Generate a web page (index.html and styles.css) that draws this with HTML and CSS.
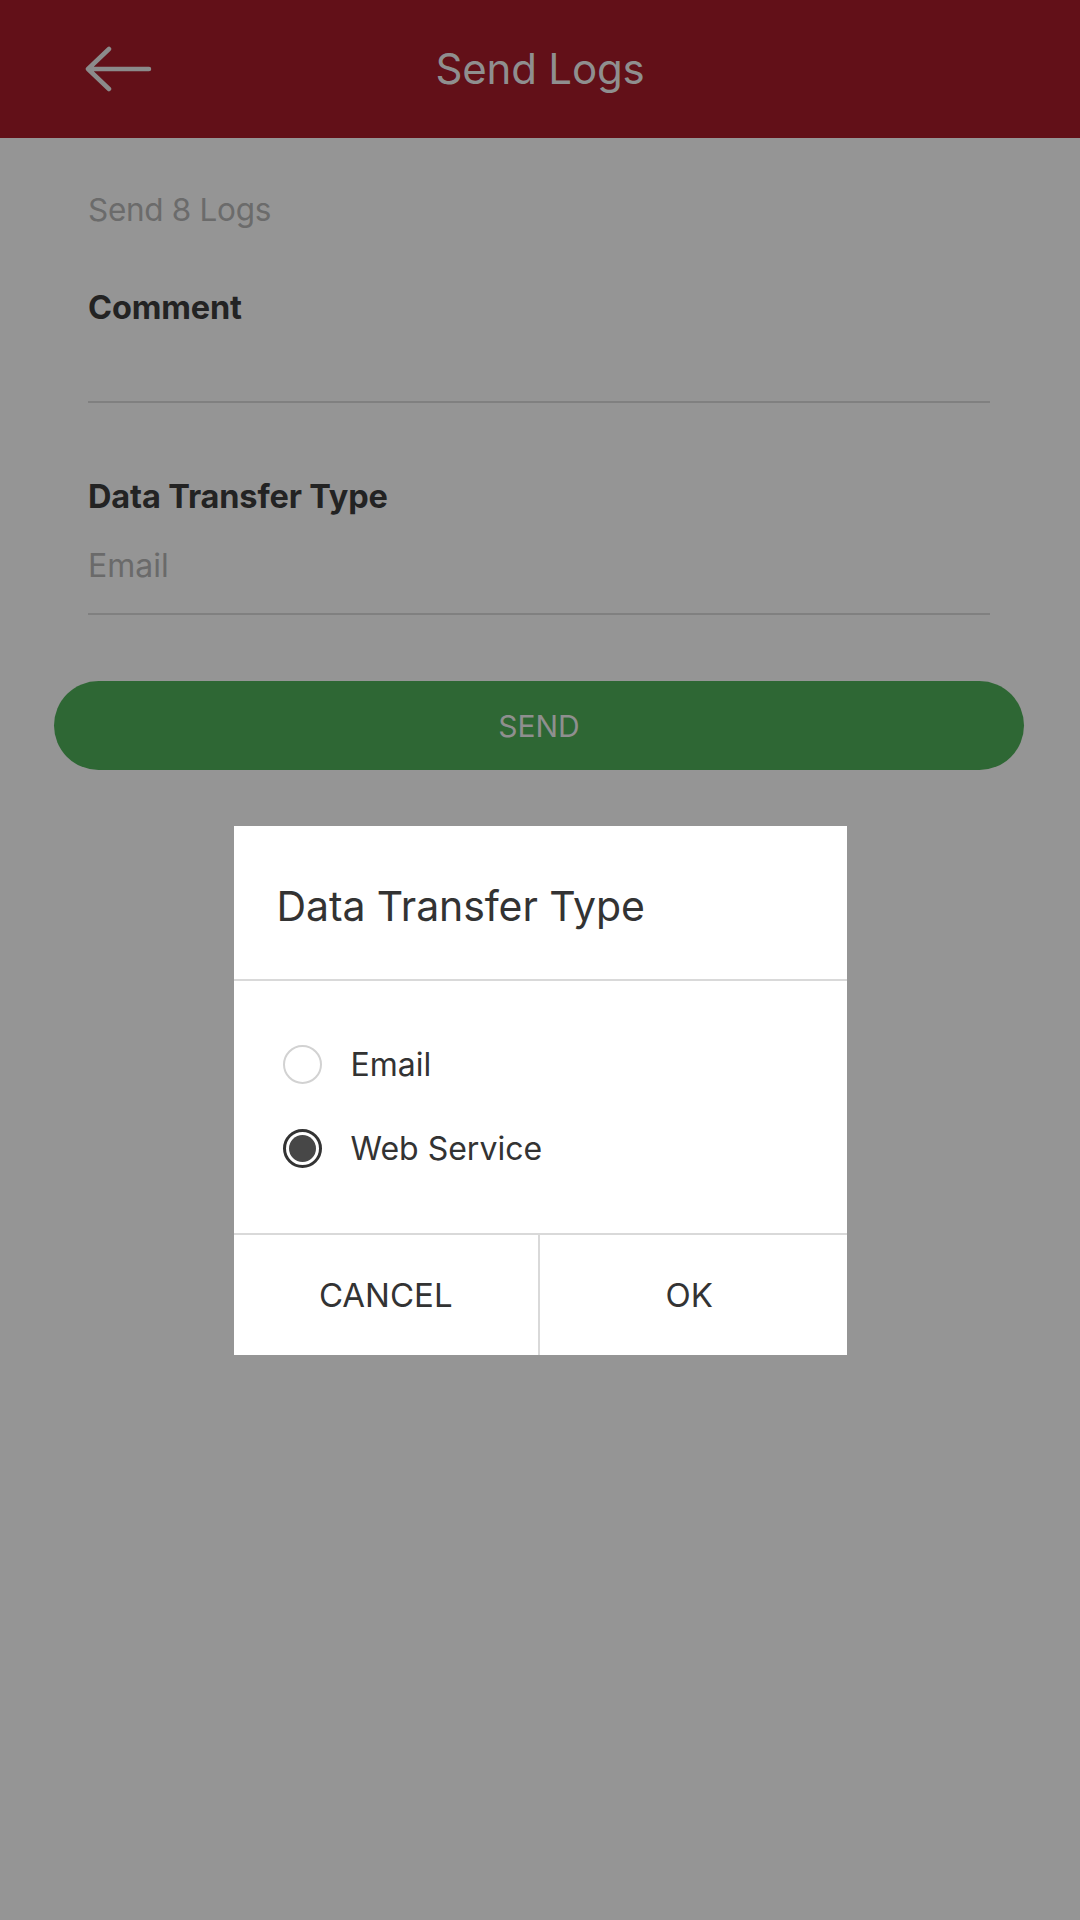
FILE: index.html
```html
<!DOCTYPE html>
<html lang="en">
<head>
<meta charset="utf-8">
<title>Send Logs</title>
<link rel="stylesheet" href="styles.css">
</head>
<body>
<div class="app">
  <header class="topbar">
    <div class="topbar-left">
      <svg class="back" width="68" height="46" viewBox="0 0 68 46" aria-hidden="true">
        <path d="M3 23 H64 M24 3 L3 23 L24 43" fill="none" stroke="#8b8b8b" stroke-width="4.5" stroke-linecap="round" stroke-linejoin="round"/>
      </svg>
    </div>
    <h1 class="topbar-title">Send Logs</h1>
    <div class="topbar-right"></div>
  </header>

  <main class="content">
    <p class="count">Send 8 Logs</p>
    <label class="field-label">Comment</label>
    <div class="field field-comment"></div>
    <label class="field-label field-label-2">Data Transfer Type</label>
    <div class="field field-select"><span class="field-value">Email</span></div>
    <button class="send-btn" type="button">SEND</button>
  </main>
</div>

<div class="overlay">
  <div class="dialog" role="dialog">
    <div class="dialog-head">Data Transfer Type</div>
    <div class="dialog-body">
      <div class="option">
        <span class="radio"></span>
        <span class="option-text">Email</span>
      </div>
      <div class="option">
        <span class="radio radio-on"><span class="radio-dot"></span></span>
        <span class="option-text">Web Service</span>
      </div>
    </div>
    <div class="dialog-actions">
      <button class="action action-cancel" type="button">CANCEL</button>
      <button class="action action-ok" type="button">OK</button>
    </div>
  </div>
</div>
</body>
</html>
```

FILE: styles.css
```css
* { box-sizing: border-box; }

html, body {
  margin: 0;
  padding: 0;
}

body {
  width: 1080px;
  height: 1920px;
  background: #959595;
  font-family: Inter, "Noto Sans", "Liberation Sans", sans-serif;
  overflow: hidden;
}

.app {
  display: flex;
  flex-direction: column;
  height: 1920px;
}

.topbar {
  height: 138px;
  background: #621018;
  display: grid;
  grid-template-columns: 1fr auto 1fr;
  align-items: center;
}

.topbar-left {
  display: flex;
  align-items: center;
  padding-left: 85px;
}

.back { display: block; }

.topbar-title {
  margin: 0;
  font-size: 42px;
  font-weight: 400;
  line-height: 138px;
  color: #8f8f8f;
  letter-spacing: -0.2px;
}

.content {
  display: flex;
  flex-direction: column;
  padding: 52px 90px 0 88px;
}

.count {
  margin: 0;
  font-size: 31.5px;
  line-height: 40px;
  color: #6b6b6b;
  letter-spacing: -0.3px;
}

.field-label {
  display: block;
  margin-top: 58px;
  font-size: 32.5px;
  line-height: 40px;
  font-weight: 700;
  color: #232323;
  letter-spacing: -0.15px;
}

.field-label-2 {
  margin-top: 74px;
}

.field {
  border-bottom: 2px solid #808080;
}

.field-comment {
  height: 75px;
}

.field-select {
  padding-top: 29px;
  padding-bottom: 27px;
}

.field-value {
  display: block;
  font-size: 32px;
  line-height: 40px;
  color: #6a6a6a;
}

.send-btn {
  margin: 66px -34px 0 -34px;
  height: 89px;
  border: none;
  border-radius: 45px;
  background: #2e6734;
  color: #8f8f8f;
  font-family: inherit;
  font-size: 30px;
  line-height: normal;
  display: flex;
  align-items: center;
  justify-content: center;
  padding: 0;
}

.overlay {
  position: fixed;
  inset: 0;
  display: flex;
  justify-content: center;
  align-items: flex-start;
  padding-top: 826px;
}

.dialog {
  width: 613px;
  height: 529px;
  background: #ffffff;
  display: flex;
  flex-direction: column;
}

.dialog-head {
  height: 155px;
  padding: 55px 0 0 43px;
  font-size: 41px;
  line-height: 50px;
  color: #333333;
  border-bottom: 2px solid #d9d9d9;
  letter-spacing: -0.1px;
}

.dialog-body {
  padding: 41px 0 42px 49px;
  border-bottom: 2px solid #d9d9d9;
}

.option {
  height: 84.5px;
  display: flex;
  align-items: center;
  gap: 29px;
}

.radio {
  width: 39px;
  height: 39px;
  border-radius: 50%;
  border: 2px solid #d2d2d2;
  display: flex;
  align-items: center;
  justify-content: center;
  flex: none;
}

.radio-on {
  border: 3px solid #333333;
}

.radio-dot {
  width: 27px;
  height: 27px;
  border-radius: 50%;
  background: #474747;
}

.option-text {
  font-size: 32px;
  line-height: normal;
  color: #333333;
}

.dialog-actions {
  flex: 1;
  display: grid;
  grid-template-columns: 1fr 1fr;
}

.action {
  border: none;
  background: transparent;
  font-family: inherit;
  font-size: 33px;
  color: #333333;
  padding: 0;
  display: flex;
  align-items: center;
  justify-content: center;
}

.action-cancel {
  border-right: 2px solid #d9d9d9;
}

.action-ok {
  padding-right: 8px;
}
```
